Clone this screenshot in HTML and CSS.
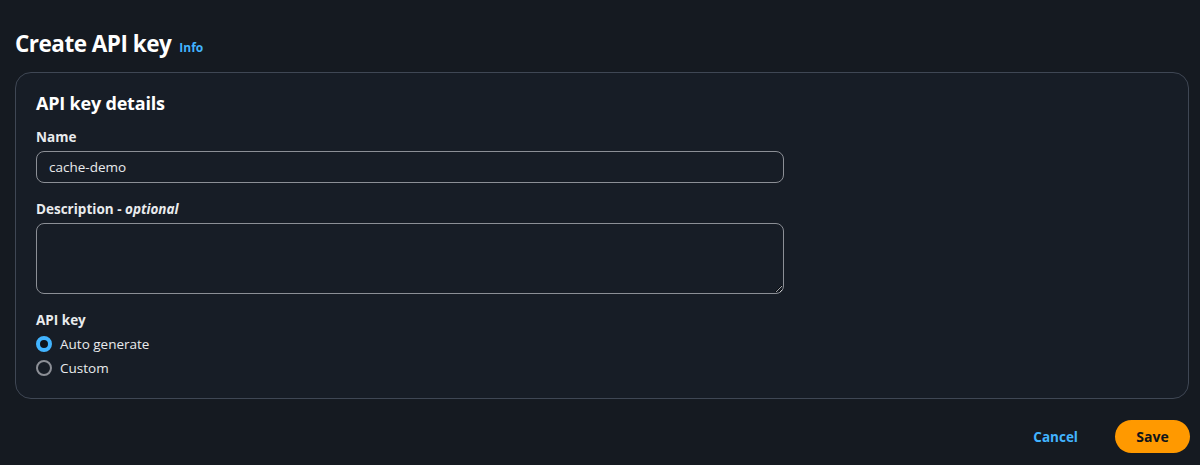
FILE: index.html
```html
<!DOCTYPE html>
<html lang="en">
<head>
<meta charset="utf-8">
<title>Create API key</title>
<link rel="stylesheet" href="styles.css">
</head>
<body>
<div class="page">
  <header class="page-header">
    <h1 class="page-title">Create API key</h1>
    <a class="info-link" href="#">Info</a>
  </header>
  <section class="container">
    <h2 class="container-title">API key details</h2>
    <div class="field">
      <label class="field-label" for="name">Name</label>
      <input class="text-input" id="name" type="text" value="cache-demo">
    </div>
    <div class="field">
      <label class="field-label" for="desc">Description - <i>optional</i></label>
      <textarea class="text-area" id="desc"></textarea>
    </div>
    <div class="field">
      <span class="field-label">API key</span>
      <div class="radio-group">
        <label class="radio-row"><span class="radio checked"></span><span>Auto generate</span></label>
        <label class="radio-row"><span class="radio"></span><span>Custom</span></label>
      </div>
    </div>
  </section>
  <footer class="actions">
    <a class="btn-link" href="#">Cancel</a>
    <button class="btn-primary" type="button">Save</button>
  </footer>
</div>
</body>
</html>
```

FILE: styles.css
```css
* { box-sizing: border-box; }
html, body {
  margin: 0;
  padding: 0;
  background: #151a21;
  color: #d1d5db;
  font-family: "Open Sans", "Noto Sans", sans-serif;
}
.page {
  padding: 28px 11px 0 15px;
}
.page-header {
  display: flex;
  align-items: baseline;
  gap: 8px;
  height: 44px;
}
.page-title {
  margin: 0;
  font-size: 22.5px;
  font-weight: 700;
  color: #ffffff;
  letter-spacing: -0.5px;
  line-height: 32px;
}
.info-link {
  font-size: 12px;
  font-weight: 700;
  color: #42b4ff;
  text-decoration: none;
}
.container {
  background: #171d26;
  border: 1px solid #3f4754;
  border-radius: 16px;
  padding: 18px 20px 20px 20px;
  height: 327px;
}
.container-title {
  margin: 0 0 12px 0;
  font-size: 18px;
  font-weight: 700;
  color: #ffffff;
  line-height: 24px;
  letter-spacing: -0.2px;
}
.field { margin-bottom: 16px; }
.field-label {
  display: block;
  font-size: 13.5px;
  font-weight: 700;
  color: #e9ebed;
  line-height: 20px;
  margin-bottom: 4px;
}
.field-label i { font-weight: 700; }
.text-input, .text-area {
  display: block;
  width: 748px;
  background: #171d26;
  border: 1px solid #8c8f96;
  border-radius: 8px;
  color: #e9ebed;
  font-family: inherit;
  font-size: 13.5px;
  padding: 0 12px;
}
.text-input { height: 32px; }
.text-area { height: 71px; resize: vertical; }
.radio-group {
  display: flex;
  flex-direction: column;
  gap: 4px;
}
.radio-row {
  display: flex;
  align-items: center;
  gap: 8px;
  font-size: 13.5px;
  color: #e9ebed;
  line-height: 20px;
}
.radio {
  width: 16px;
  height: 16px;
  border-radius: 50%;
  border: 2px solid #8c8f96;
  flex: none;
}
.radio.checked {
  border: 4.5px solid #42b4ff;
  background: #0f141a;
}
.actions {
  display: flex;
  justify-content: flex-end;
  align-items: center;
  gap: 37px;
  margin-top: 21px;
}
.btn-link {
  font-size: 13.5px;
  font-weight: 700;
  color: #42b4ff;
  text-decoration: none;
}
.btn-primary {
  width: 75px;
  height: 33px;
  margin-right: -1px;
  border: none;
  border-radius: 17px;
  background: #ff9900;
  color: #0f141a;
  font-family: inherit;
  font-size: 14px;
  font-weight: 700;
}
```
